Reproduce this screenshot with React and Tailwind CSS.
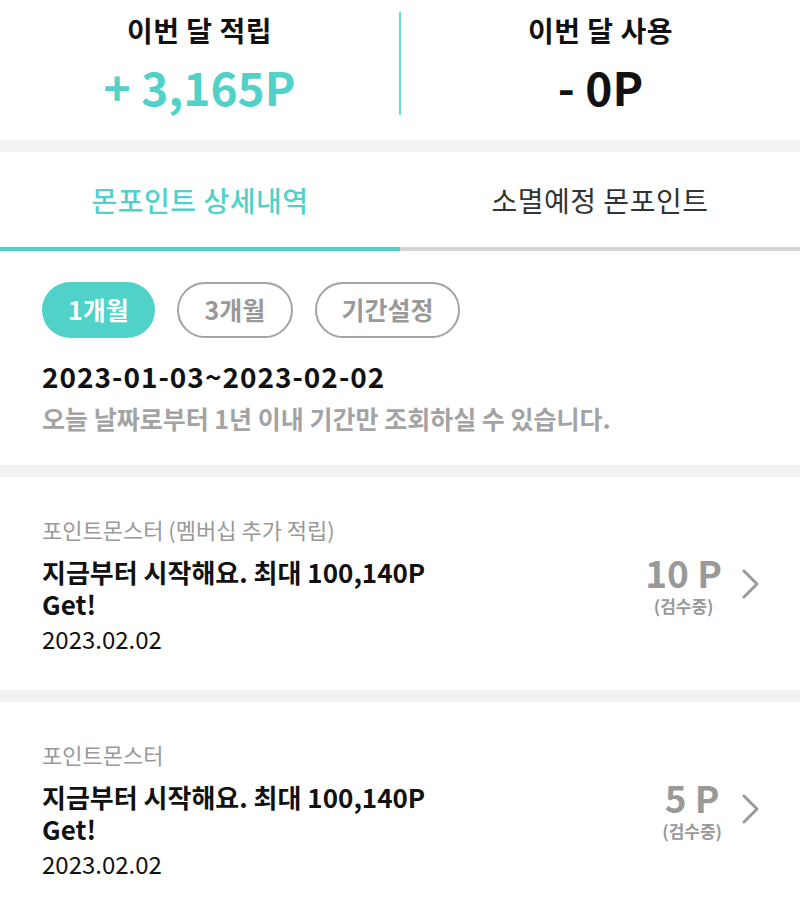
import React, { useState } from 'react'

const items = [
    { source: '포인트몬스터 (멤버십 추가 적립)', title: '지금부터 시작해요. 최대 100,140P', title2: 'Get!', date: '2023.02.02', point: '10 P' },
    { source: '포인트몬스터', title: '지금부터 시작해요. 최대 100,140P', title2: 'Get!', date: '2023.02.02', point: '5 P' },
]

function Chevron() {
    return (
        <svg width="18" height="30" viewBox="0 0 18 30" fill="none" className="ml-[20px]">
            <polyline points="2,2 15,15 2,28" stroke="#9a9a9a" strokeWidth="3" strokeLinecap="round" strokeLinejoin="round" />
        </svg>
    )
}

export default function App() {
    const [tab, setTab] = useState(0)
    const [period, setPeriod] = useState(0)
    const periods = [
        { label: '1개월', w: 'w-[113px]' },
        { label: '3개월', w: 'w-[116px]' },
        { label: '기간설정', w: 'w-[145px]' },
    ]

    return (
        <div className="w-[800px] min-h-[905px] bg-white font-['Noto_Sans_CJK_KR','Noto_Sans',sans-serif] text-[#111]">
            {/* this month summary */}
            <div className="flex h-[140px]">
                <div className="flex-1 flex flex-col items-center pt-[10px]">
                    <p className="text-[28px] leading-[40px] font-semibold tracking-[0.5px]">이번 달 적립</p>
                    <p className="mt-[8px] text-[46px] leading-[56px] font-bold text-[#50d2c9]">+ 3,165P</p>
                </div>
                <div className="w-[2px] h-[103px] mt-[12px] bg-[#6fd8d1]" />
                <div className="flex-1 flex flex-col items-center pt-[10px]">
                    <p className="text-[28px] leading-[40px] font-semibold tracking-[0.5px]">이번 달 사용</p>
                    <p className="mt-[8px] text-[46px] leading-[56px] font-bold">- 0P</p>
                </div>
            </div>

            <div className="h-[12px] bg-[#f2f2f2]" />

            {/* tabs */}
            <div className="flex">
                {['몬포인트 상세내역', '소멸예정 몬포인트'].map((t, i) => (
                    <button
                        key={t}
                        onClick={() => setTab(i)}
                        className={
                            'flex-1 flex flex-col ' +
                            (tab === i ? 'text-[#50d2c9] font-medium' : 'text-[#333]')
                        }
                    >
                        <span className="h-[95px] flex items-center justify-center text-[28px] tracking-[0.5px]">{t}</span>
                        <span className={'h-[4px] w-full ' + (tab === i ? 'bg-[#50d2c9]' : 'bg-[#d4d4d4]')} />
                    </button>
                ))}
            </div>

            {/* period filter */}
            <div className="px-[42px] pt-[31px] pb-[29px]">
                <div className="flex gap-[22px]">
                    {periods.map((p, i) => (
                        <button
                            key={p.label}
                            onClick={() => setPeriod(i)}
                            className={
                                p.w + ' h-[56px] rounded-full flex items-center justify-center text-[25px] font-bold ' +
                                (period === i
                                    ? 'bg-[#50d2c9] text-white'
                                    : 'border-2 border-[#a3a3a3] text-[#999]')
                            }
                        >
                            {p.label}
                        </button>
                    ))}
                </div>
                <p className="mt-[20px] text-[28px] leading-[36px] font-bold tracking-[1px]">2023-01-03~2023-02-02</p>
                <p className="mt-[6px] text-[25px] leading-[36px] font-semibold text-[#a3a3a3]">
                    오늘 날짜로부터 1년 이내 기간만 조회하실 수 있습니다.
                </p>
            </div>

            {items.map((item, i) => (
                <div key={i}>
                    <div className="h-[12px] bg-[#f2f2f2]" />
                    <div className="flex items-center pl-[42px] pr-[40px] pt-[37px] pb-[36px]">
                        <div className="flex-1">
                            <p className="text-[22px] leading-[30px] text-[#999]">{item.source}</p>
                            <p className="mt-[12px] text-[26px] leading-[32px] font-bold">
                                {item.title}
                                <br />
                                {item.title2}
                            </p>
                            <p className="mt-[4px] text-[24px] leading-[30px]">{item.date}</p>
                        </div>
                        <div className="flex flex-col items-center">
                            <p className="text-[37px] leading-[42px] font-bold text-[#999]">{item.point}</p>
                            <p className="mt-[2px] text-[17px] leading-[22px] font-semibold text-[#999]">(검수중)</p>
                        </div>
                        <Chevron />
                    </div>
                </div>
            ))}
        </div>
    )
}
